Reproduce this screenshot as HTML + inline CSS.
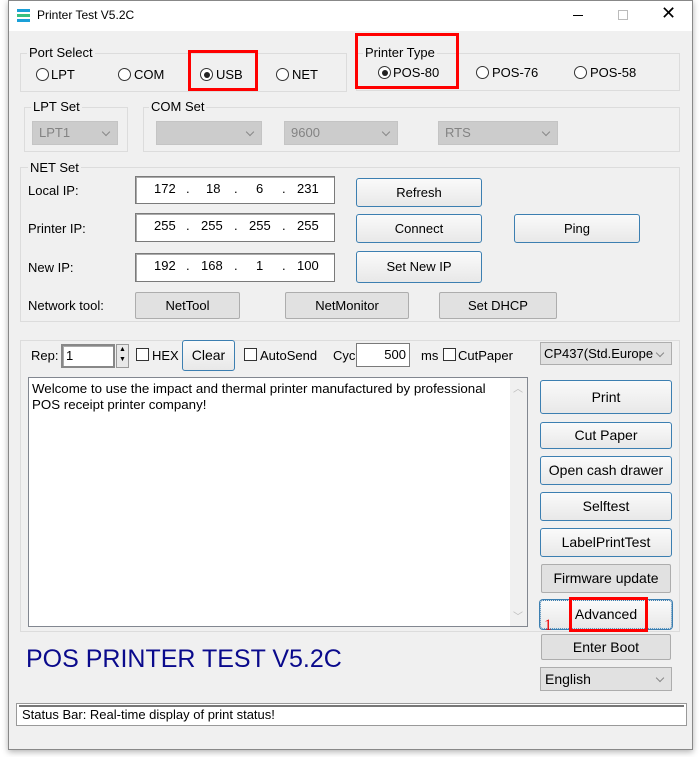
<!DOCTYPE html>
<html><head><meta charset="utf-8"><style>
*{box-sizing:border-box;margin:0;padding:0}
body{width:700px;height:757px;background:#fff;position:relative;overflow:hidden;font-family:"Liberation Sans",Arial,sans-serif;font-size:13px;color:#000}
.a{position:absolute}
.win{left:8px;top:0;width:685px;height:750px;background:#f0f0f0;border:1px solid #888;box-shadow:0 2px 6px rgba(0,0,0,.3)}
.tb{left:9px;top:1px;width:683px;height:30px;background:#fff}
.grp{position:absolute;border:1px solid #dcdcdc}
.lbl{position:absolute;background:#f0f0f0;padding:0 2px;white-space:nowrap}
.rad{position:absolute;width:13px;height:13px;border:1px solid #333;border-radius:50%;background:#fff}
.rad.on::after{content:"";position:absolute;left:2.5px;top:2.5px;width:6px;height:6px;border-radius:50%;background:#222}
.t{position:absolute;white-space:nowrap}
.cmb{position:absolute;background:#ccc;border:1px solid #c4c4c4;color:#838383;padding:3px 0 0 6px}
.cmb::after{content:"";position:absolute;right:8px;top:7px;width:5px;height:5px;border-right:1px solid #888;border-bottom:1px solid #888;transform:rotate(45deg)}
.btn{position:absolute;background:linear-gradient(#fafafa,#e8e8e8);border:1px solid #adadad;text-align:center;border-radius:2px}
.btn.b{border-color:#3c7fb1;border-radius:3px}
.ip{position:absolute;background:#fff;border:1px solid #7a7a7a;box-shadow:inset 1px 1px 0 #aaa}
.ip span{position:absolute;top:4px}
.chk{position:absolute;width:13px;height:13px;border:1px solid #333;background:#fff}
.red{position:absolute;border:3px solid #f00}
</style></head><body>
<div class="a win"></div>
<div class="a tb"></div>
<div class="a" style="left:17px;top:9px;width:13px;height:3px;background:#1aa0d8"></div>
<div class="a" style="left:17px;top:14px;width:13px;height:3px;background:#38c080"></div>
<div class="a" style="left:17px;top:19px;width:13px;height:3px;background:#1aa0d8"></div>
<div class="t" style="left:37px;top:8px;font-size:12px">Printer Test V5.2C</div>
<div class="a" style="left:573px;top:15px;width:10px;height:1px;background:#000"></div>
<div class="a" style="left:618px;top:10px;width:10px;height:10px;border:1px solid #bbb"></div>
<div class="t" style="left:661px;top:3px;font-size:18px;font-weight:300">✕</div>

<div class="grp" style="left:20px;top:53px;width:327px;height:39px"></div>
<div class="lbl" style="left:27px;top:45px">Port Select</div>
<div class="rad" style="left:36px;top:68px"></div><div class="t" style="left:51px;top:67px">LPT</div>
<div class="rad" style="left:118px;top:68px"></div><div class="t" style="left:134px;top:67px">COM</div>
<div class="rad on" style="left:200px;top:68px"></div><div class="t" style="left:216px;top:67px">USB</div>
<div class="rad" style="left:276px;top:68px"></div><div class="t" style="left:292px;top:67px">NET</div>
<div class="red" style="left:188px;top:50px;width:70px;height:41px"></div>

<div class="grp" style="left:356px;top:53px;width:324px;height:38px"></div>
<div class="lbl" style="left:363px;top:45px">Printer Type</div>
<div class="rad on" style="left:378px;top:66px"></div><div class="t" style="left:393px;top:65px">POS-80</div>
<div class="rad" style="left:476px;top:66px"></div><div class="t" style="left:492px;top:65px">POS-76</div>
<div class="rad" style="left:574px;top:66px"></div><div class="t" style="left:590px;top:65px">POS-58</div>
<div class="red" style="left:355px;top:33px;width:104px;height:56px"></div>

<div class="grp" style="left:24px;top:107px;width:104px;height:45px"></div>
<div class="lbl" style="left:31px;top:99px">LPT Set</div>
<div class="cmb" style="left:32px;top:121px;width:86px;height:24px">LPT1</div>
<div class="grp" style="left:143px;top:107px;width:537px;height:45px"></div>
<div class="lbl" style="left:149px;top:99px">COM Set</div>
<div class="cmb" style="left:156px;top:121px;width:106px;height:24px"></div>
<div class="cmb" style="left:284px;top:121px;width:114px;height:24px">9600</div>
<div class="cmb" style="left:438px;top:121px;width:120px;height:24px">RTS</div>

<div class="grp" style="left:20px;top:167px;width:660px;height:155px"></div>
<div class="lbl" style="left:28px;top:160px">NET Set</div>
<div class="t" style="left:28px;top:183px">Local IP:</div>
<div class="t" style="left:28px;top:221px">Printer IP:</div>
<div class="t" style="left:28px;top:260px">New IP:</div>
<div class="t" style="left:28px;top:298px">Network tool:</div>
<div class="ip" style="left:135px;top:176px;width:200px;height:28px"><span style="left:18px">172</span><span style="left:50px">.</span><span style="left:70px">18</span><span style="left:98px">.</span><span style="left:120px">6</span><span style="left:146px">.</span><span style="left:161px">231</span></div>
<div class="ip" style="left:135px;top:213px;width:200px;height:29px"><span style="left:18px">255</span><span style="left:50px">.</span><span style="left:65px">255</span><span style="left:98px">.</span><span style="left:113px">255</span><span style="left:146px">.</span><span style="left:161px">255</span></div>
<div class="ip" style="left:135px;top:253px;width:200px;height:29px"><span style="left:18px">192</span><span style="left:50px">.</span><span style="left:65px">168</span><span style="left:98px">.</span><span style="left:120px">1</span><span style="left:146px">.</span><span style="left:161px">100</span></div>
<div class="btn b" style="left:356px;top:178px;width:126px;height:29px;line-height:27px">Refresh</div>
<div class="btn b" style="left:356px;top:214px;width:126px;height:29px;line-height:27px">Connect</div>
<div class="btn b" style="left:514px;top:214px;width:126px;height:29px;line-height:27px">Ping</div>
<div class="btn b" style="left:356px;top:251px;width:126px;height:32px;line-height:30px">Set New IP</div>
<div class="btn" style="left:135px;top:292px;width:105px;height:27px;line-height:25px;background:#e1e1e1">NetTool</div>
<div class="btn" style="left:285px;top:292px;width:124px;height:27px;line-height:25px;background:#e1e1e1">NetMonitor</div>
<div class="btn" style="left:439px;top:292px;width:118px;height:27px;line-height:25px;background:#e1e1e1">Set DHCP</div>

<div class="grp" style="left:20px;top:340px;width:660px;height:292px"></div>
<div class="t" style="left:31px;top:348px">Rep:</div>
<div class="ip" style="left:61px;top:344px;width:54px;height:24px;border:2px solid #888"><span style="left:3px;top:2px">1</span></div>
<div class="a" style="left:116px;top:344px;width:13px;height:24px;background:#e8e8e8;border:1px solid #999;font-size:7px;text-align:center;line-height:10px">▲<br>▼</div>
<div class="chk" style="left:136px;top:348px"></div><div class="t" style="left:152px;top:348px">HEX</div>
<div class="btn b" style="left:182px;top:340px;width:53px;height:31px;line-height:29px;font-size:14px">Clear</div>
<div class="chk" style="left:244px;top:348px"></div><div class="t" style="left:260px;top:348px">AutoSend</div>
<div class="t" style="left:333px;top:348px">Cyc</div>
<div class="ip" style="left:356px;top:343px;width:54px;height:24px;box-shadow:none"><span style="right:3px;top:3px">500</span></div>
<div class="t" style="left:421px;top:348px">ms</div>
<div class="chk" style="left:443px;top:348px"></div><div class="t" style="left:458px;top:348px">CutPaper</div>
<div class="cmb" style="left:540px;top:342px;width:132px;height:23px;color:#000;background:#e1e1e1;border-color:#adadad;font-size:13px;padding-top:3px;padding-left:3px;overflow:hidden;white-space:nowrap">CP437(Std.Europe&nbsp;&nbsp;&nbsp;</div>
<div class="a" style="left:28px;top:377px;width:500px;height:250px;background:#fff;border:1px solid #828790;padding:3px 3px;line-height:16px;font-size:13.3px">Welcome to use the impact and thermal printer manufactured by professional<br>POS receipt printer company!</div>
<div class="a" style="left:510px;top:378px;width:17px;height:248px;background:#f0f0f0"></div>
<div class="t" style="left:513px;top:380px;color:#bbb;font-size:10px">︿</div>
<div class="t" style="left:513px;top:608px;color:#bbb;font-size:10px">﹀</div>

<div class="btn b" style="left:540px;top:380px;width:132px;height:34px;line-height:32px;font-size:14px">Print</div>
<div class="btn b" style="left:540px;top:422px;width:132px;height:27px;line-height:25px;font-size:14px">Cut Paper</div>
<div class="btn b" style="left:540px;top:456px;width:132px;height:29px;line-height:27px;font-size:14px">Open cash drawer</div>
<div class="btn b" style="left:540px;top:492px;width:132px;height:29px;line-height:27px;font-size:14px">Selftest</div>
<div class="btn b" style="left:540px;top:528px;width:132px;height:29px;line-height:27px;font-size:14px">LabelPrintTest</div>
<div class="btn" style="left:541px;top:564px;width:130px;height:29px;line-height:27px;font-size:14px;background:#e1e1e1">Firmware update</div>
<div class="btn b" style="left:540px;top:600px;width:132px;height:29px;line-height:27px;font-size:14px;border-style:dotted;border-width:1px;box-shadow:0 0 0 1px #3c7fb1">Advanced</div>
<div class="red" style="left:569px;top:597px;width:79px;height:35px"></div>
<div class="t" style="left:544px;top:617px;color:#e00;font-family:'Liberation Serif',serif;font-size:16px">1</div>
<div class="btn" style="left:541px;top:634px;width:130px;height:26px;line-height:24px;font-size:14px;background:#e1e1e1">Enter Boot</div>
<div class="cmb" style="left:540px;top:667px;width:132px;height:24px;color:#000;background:#e1e1e1;border-color:#adadad;font-size:14px;padding-top:3px;padding-left:4px">English</div>

<div class="t" style="left:26px;top:645px;color:#0a0a8c;font-size:25px">POS PRINTER TEST V5.2C</div>
<div class="a" style="left:16px;top:703px;width:671px;height:23px;border:1px solid #999;background:#fff;padding:1px 2px"><div style="border-top:2px solid #777;padding-left:3px;font-size:13px;line-height:16px">Status Bar: Real-time display of print status!</div></div>
</body></html>
